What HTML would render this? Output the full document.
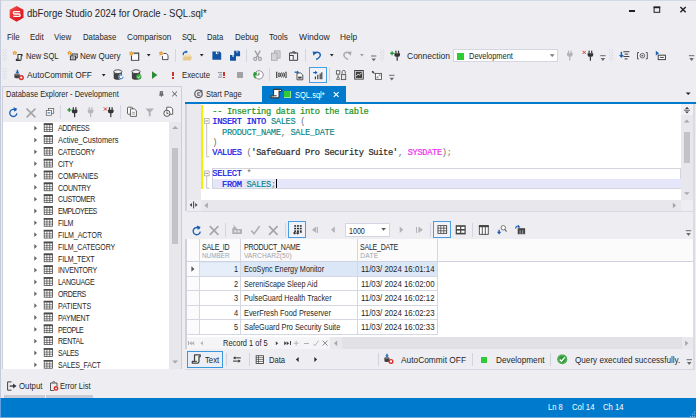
<!DOCTYPE html>
<html lang="en"><head><meta charset="utf-8"><title>dbForge Studio 2024 for Oracle - SQL.sql*</title>
<style>
html,body{margin:0;padding:0;}
body{width:696px;height:418px;overflow:hidden;background:#eeeef2;position:relative;font-family:"Liberation Sans",sans-serif;}
#w{position:absolute;left:0;top:0;width:696px;height:418px;overflow:hidden;background:#eeeef2;}
#w div,#w span,#w svg{position:absolute;}
#w span{white-space:pre;transform:scaleX(0.93);transform-origin:0 0;}
#w span.m{font-family:'Liberation Mono',monospace;transform:none;}
#w svg{overflow:visible;}
</style></head><body><div id="w">
<div style="left:0px;top:0px;width:696px;height:0.8px;background:#d3d8e5;"></div>
<div style="left:0px;top:0px;width:1.1px;height:418px;background:#c6cbdc;"></div>
<div style="left:453px;top:49px;width:105px;height:13px;background:#fff;border:1px solid #d6d6e2;box-sizing:border-box;"></div>
<div style="left:457px;top:53px;width:6.5px;height:6.5px;background:#2ecc32;"></div>
<div style="left:2px;top:86.2px;width:180px;height:283.3px;background:#eeeef2;border:1px solid #ccced9;box-sizing:border-box;"></div>
<div style="left:3px;top:121.5px;width:166.2px;height:247px;background:#fff;"></div>
<div style="left:169.2px;top:121.5px;width:12px;height:247px;background:#e8e8ec;"></div>
<div style="left:172px;top:148.2px;width:6.3px;height:95.4px;background:#c2c3c9;"></div>
<div style="left:3px;top:368.5px;width:178px;height:0.5px;background:#eeeef2;"></div>
<div style="left:262px;top:86.3px;width:83.5px;height:16.5px;background:#007acc;"></div>
<div style="left:184.5px;top:102.3px;width:511px;height:1.9px;background:#007acc;"></div>
<div style="left:185px;top:104px;width:508.5px;height:264.8px;background:#fff;"></div>
<div style="left:185px;top:104px;width:1.5px;height:265px;background:#d0d1da;"></div>
<div style="left:186.5px;top:104px;width:14.2px;height:95.6px;background:#e9e9ee;"></div>
<div style="left:200.7px;top:105.3px;width:2.8px;height:83.3px;background:#f2f200;"></div>
<div style="left:212.3px;top:168.2px;width:469px;height:20.5px;background:#fff;border:1px solid #d4d4dc;box-sizing:border-box;"></div>
<div style="left:212.8px;top:178.6px;width:468px;height:9.6px;background:#e6e6fa;"></div>
<div style="left:681px;top:104px;width:12.5px;height:95.6px;background:#e8e8ec;"></div>
<div style="left:683.7px;top:131.7px;width:6.4px;height:31px;background:#c2c3c9;"></div>
<div style="left:681px;top:104px;width:12.5px;height:11.4px;background:#f1f1f5;"></div>
<div style="left:186.5px;top:199.6px;width:494.5px;height:11.4px;background:#e8e8ec;"></div>
<div style="left:186.5px;top:199.6px;width:14.2px;height:11.4px;background:#eeeef2;"></div>
<div style="left:681px;top:199.6px;width:12.5px;height:11.4px;background:#eeeef2;"></div>
<div style="left:185px;top:211px;width:508.5px;height:28px;background:#eeeef2;"></div>
<div style="left:186.5px;top:211.2px;width:507px;height:0.7px;background:#d9dae3;"></div>
<div style="left:276.2px;top:179.2px;width:0.9px;height:8.8px;background:#000;"></div>
<div style="left:186.5px;top:239px;width:506.5px;height:22.2px;background:#fbfbfc;"></div>
<div style="left:186.5px;top:261px;width:506.5px;height:0.8px;background:#cfd2e0;"></div>
<div style="left:186.5px;top:261.8px;width:251px;height:72.6px;background:#fff;"></div>
<div style="left:186.5px;top:261.8px;width:12.1px;height:72.6px;background:#fbfbfd;"></div>
<div style="left:199px;top:261.8px;width:238.3px;height:14.3px;background:#dbe7f6;"></div>
<div style="left:199.3px;top:262.5px;width:41px;height:13px;background:#e6eefa;"></div>
<div style="left:186.5px;top:275.62px;width:251px;height:0.8px;background:#d5d8e3;"></div>
<div style="left:186.5px;top:290.14000000000004px;width:251px;height:0.8px;background:#d5d8e3;"></div>
<div style="left:186.5px;top:304.66px;width:251px;height:0.8px;background:#d5d8e3;"></div>
<div style="left:186.5px;top:319.18px;width:251px;height:0.8px;background:#d5d8e3;"></div>
<div style="left:186.5px;top:333.70000000000005px;width:251px;height:0.8px;background:#d5d8e3;"></div>
<div style="left:198.6px;top:239px;width:0.8px;height:95.4px;background:#d5d8e3;"></div>
<div style="left:240.3px;top:239px;width:0.8px;height:95.4px;background:#d5d8e3;"></div>
<div style="left:357.4px;top:239px;width:0.8px;height:95.4px;background:#d5d8e3;"></div>
<div style="left:437.2px;top:239px;width:0.8px;height:95.4px;background:#d5d8e3;"></div>
<div style="left:186.5px;top:337px;width:143.7px;height:11.7px;background:#f5f5f8;"></div>
<div style="left:330.2px;top:337px;width:362.8px;height:11.7px;background:#e2e2e6;"></div>
<div style="left:330.2px;top:337px;width:11.5px;height:11.7px;background:#e9e9ed;"></div>
<div style="left:681.5px;top:337px;width:11.5px;height:11.7px;background:#e9e9ed;"></div>
<div style="left:185px;top:348.7px;width:508.5px;height:20.2px;background:#eeeef2;"></div>
<div style="left:185px;top:368.9px;width:509.5px;height:1.2px;background:#d6d8e4;"></div>
<div style="left:186.7px;top:351.3px;width:36.5px;height:16.3px;background:#e9eef7;border:1.2px solid #3c96dc;box-sizing:border-box;"></div>
<div style="left:481px;top:357px;width:6px;height:5.8px;background:#2ecc32;"></div>
<div style="left:225.5px;top:353px;width:0.8px;height:13px;background:#d2d3dc;"></div>
<div style="left:248.9px;top:353px;width:0.8px;height:13px;background:#d2d3dc;"></div>
<div style="left:377.7px;top:353px;width:0.8px;height:13px;background:#d2d3dc;"></div>
<div style="left:471.9px;top:353px;width:0.8px;height:13px;background:#d2d3dc;"></div>
<div style="left:550.4px;top:353px;width:0.8px;height:13px;background:#d2d3dc;"></div>
<div style="left:693px;top:104px;width:1.6px;height:265px;background:#d9dbe5;"></div>
<div style="left:4.1px;top:395px;width:40.7px;height:2.8px;background:#c9cad6;"></div>
<div style="left:46.3px;top:395px;width:46.6px;height:2.8px;background:#c9cad6;"></div>
<div style="left:0px;top:397.8px;width:696px;height:20.2px;background:#007acc;"></div>
<div style="left:0px;top:397.8px;width:1.1px;height:20.2px;background:#5aa3de;"></div>
<div style="left:0px;top:417px;width:696px;height:1px;background:#6aacdf;"></div>
<div style="left:628.6px;top:10px;width:6.3px;height:1.7px;background:#222;"></div>
<div style="left:175.1px;top:49.3px;width:0.9px;height:12.900000000000006px;background:#d3d6e2;"></div>
<div style="left:246.1px;top:49.3px;width:0.9px;height:12.900000000000006px;background:#d3d6e2;"></div>
<div style="left:305.1px;top:49.3px;width:0.9px;height:12.900000000000006px;background:#d3d6e2;"></div>
<div style="left:172px;top:71.8px;width:1.7px;height:4.6px;background:#c8372d;"></div>
<div style="left:172px;top:77.3px;width:1.7px;height:1.5px;background:#c8372d;"></div>
<div style="left:223.1px;top:71.8px;width:1.7px;height:4.6px;background:#c8372d;"></div>
<div style="left:223.1px;top:77.3px;width:1.7px;height:1.2px;background:#c8372d;"></div>
<div style="left:237.4px;top:72.2px;width:5.9px;height:5.8px;background:#a2a2a4;"></div>
<div style="left:269.2px;top:68.4px;width:0.9px;height:12.899999999999991px;background:#d3d6e2;"></div>
<div style="left:308.6px;top:67px;width:18.2px;height:16.3px;background:#f2f3f8;border:1.3px solid #4a9ee0;box-sizing:border-box;"></div>
<div style="left:329.2px;top:68.4px;width:0.9px;height:12.899999999999991px;background:#d3d6e2;"></div>
<div style="left:60px;top:105.3px;width:0.9px;height:13.400000000000006px;background:#d3d6e2;"></div>
<div style="left:120.2px;top:105.3px;width:0.9px;height:13.400000000000006px;background:#d3d6e2;"></div>
<div style="left:283.6px;top:90.5px;width:7.2px;height:7.4px;background:#9be39b;"></div>
<div style="left:284.4px;top:91.3px;width:5.6px;height:5.8px;background:#2ecc32;"></div>
<div style="left:225.2px;top:223.3px;width:0.9px;height:13.699999999999989px;background:#d3d6e2;"></div>
<div style="left:285.1px;top:223.3px;width:0.9px;height:13.699999999999989px;background:#d3d6e2;"></div>
<div style="left:287.9px;top:221.2px;width:18px;height:16.5px;background:#f2f3f8;border:1.3px solid #4a9ee0;box-sizing:border-box;"></div>
<div style="left:317.2px;top:226.6px;width:1.3px;height:6.4px;background:#b4b4b8;"></div>
<div style="left:344.9px;top:223.3px;width:44.7px;height:13.4px;background:#fff;border:1px solid #d6d6e2;box-sizing:border-box;"></div>
<div style="left:415.9px;top:226.6px;width:1.3px;height:6.4px;background:#b4b4b8;"></div>
<div style="left:430.3px;top:223.3px;width:0.9px;height:13.699999999999989px;background:#d3d6e2;"></div>
<div style="left:433.2px;top:221.2px;width:18.2px;height:16.5px;background:#f2f3f8;border:1.3px solid #4a9ee0;box-sizing:border-box;"></div>
<div style="left:471.5px;top:223.3px;width:0.9px;height:13.699999999999989px;background:#d3d6e2;"></div>
<div style="left:188.2px;top:341.2px;width:0.9px;height:4px;background:#b0b0b4;"></div>
<div style="left:289.7px;top:341.2px;width:0.9px;height:4px;background:#444;"></div>
<div style="left:303.8px;top:342.9px;width:5px;height:0.8px;background:#b0b0b4;"></div>
<svg style="left:0;top:0" width="696" height="418" viewBox="0 0 696 418"><g transform="translate(9.7 5.9) scale(1)"><defs><linearGradient id="lg" x1="0" y1="0" x2="1" y2="0.9"><stop offset="0" stop-color="#f5514b"/><stop offset="0.5" stop-color="#e8282c"/><stop offset="1" stop-color="#d0181f"/></linearGradient></defs><path d="M6.9 0L13.8 3.95V11.95L6.9 15.9L0 11.95V3.95Z" fill="url(#lg)"/><path d="M10.4 5.7H4.7Q3.7 5.7 3.7 6.9Q3.7 8.1 4.7 8.1H9.4Q10.4 8.1 10.4 9.3Q10.4 10.5 9.4 10.5H3.6" fill="none" stroke="#fff" stroke-width="1.35"/></g>
<g transform="translate(653.6 6.6) scale(1)"><rect x="0.5" y="0.5" width="5.6" height="5.2" fill="none" stroke="#1e1e1e" stroke-width="1"/><rect x="0" y="0" width="6.6" height="1.6" fill="#1e1e1e"/></g>
<g transform="translate(680.4 7) scale(1)"><path d="M0 0L5.3 5.3M5.3 0L0 5.3" stroke="#222" stroke-width="1.4" fill="none"/></g>
<g transform="translate(2.6 49.3) scale(1)"><path d="M0 0.00h1.2v1h-1.2zM3 0.00h1.2v1h-1.2zM1.5 1.48h1.2v1h-1.2zM0 2.96h1.2v1h-1.2zM3 2.96h1.2v1h-1.2zM1.5 4.44h1.2v1h-1.2zM0 5.92h1.2v1h-1.2zM3 5.92h1.2v1h-1.2zM1.5 7.40h1.2v1h-1.2zM0 8.88h1.2v1h-1.2zM3 8.88h1.2v1h-1.2zM1.5 10.36h1.2v1h-1.2z" fill="#d3d4de"/></g>
<g transform="translate(12.3 50.4) scale(1)"><path d="M2.5 0L3.3 1.4L5 1.7L3.9 2.9L4.2 4.6L2.5 3.9L0.8 4.6L1.1 2.9L0 1.7L1.7 1.4Z" fill="#e0942a"/><circle cx="2.5" cy="2.5" r="0.9" fill="#f3c776"/></g>
<g transform="translate(15.8 54) scale(0.76)"><path d="M2.8 0.6H8.2V2.4H7V7C7 8.2 6.4 8.5 5.6 8.5H0.7V6.8H2.8Z" fill="#fff" stroke="#2e2e2e" stroke-width="1.35" stroke-linejoin="round"/><path d="M2.8 6.8H5.2" stroke="#2e2e2e" stroke-width="1.08" fill="none"/></g>
<g transform="translate(67 50.4) scale(1)"><path d="M2.5 0L3.3 1.4L5 1.7L3.9 2.9L4.2 4.6L2.5 3.9L0.8 4.6L1.1 2.9L0 1.7L1.7 1.4Z" fill="#e0942a"/><circle cx="2.5" cy="2.5" r="0.9" fill="#f3c776"/></g>
<g transform="translate(69.8 53.4) scale(1)"><rect x="2.2" y="0.6" width="5.2" height="3.8" fill="#fff" stroke="#333" stroke-width="1"/><rect x="0.6" y="2.6" width="5.2" height="3.8" fill="#fff" stroke="#333" stroke-width="1"/><path d="M1.6 4.6H4.8" stroke="#2e2e2e" stroke-width="0.9"/></g>
<g transform="translate(128.8 50.8) scale(1)"><path d="M2.5 0L3.3 1.4L5 1.7L3.9 2.9L4.2 4.6L2.5 3.9L0.8 4.6L1.1 2.9L0 1.7L1.7 1.4Z" fill="#e0942a"/><circle cx="2.5" cy="2.5" r="0.9" fill="#f3c776"/></g>
<g transform="translate(131 52.6) scale(1)"><path d="M2.6 0.5H7.7V7.7H0.5V3" fill="none" stroke="#404040" stroke-width="1.1"/><rect x="1.2" y="2.6" width="5.8" height="4.4" fill="#fff"/></g>
<g transform="translate(146.8 54) scale(1)"><path d="M0 0H3.8L1.9 2.4Z" fill="#2b2b2b"/></g>
<g transform="translate(158.6 50.8) scale(1)"><path d="M2.5 0L3.3 1.4L5 1.7L3.9 2.9L4.2 4.6L2.5 3.9L0.8 4.6L1.1 2.9L0 1.7L1.7 1.4Z" fill="#e0942a"/><circle cx="2.5" cy="2.5" r="0.9" fill="#f3c776"/></g>
<g transform="translate(162 53) scale(1)"><path d="M1.5 0.5H4.2L6 2.3V6.6H0.5V3" fill="#fff" stroke="#404040" stroke-width="0.9"/></g>
<g transform="translate(182 50.7) scale(1)"><path d="M0.8 4H4L4.8 3.2H9.2V9.4H0.8Z" fill="#f3e2bd"/><path d="M0.5 9.7L1.8 5.8H10L8.7 9.7Z" fill="#e8c98f"/><path d="M1.3 4.4C0.9 2 2.4 0.9 4.2 1.2" stroke="#1b62b8" stroke-width="1.3" fill="none"/><path d="M3.7 -0.5L6 1.4L3.5 2.9Z" fill="#1b62b8"/></g>
<g transform="translate(199.8 54) scale(1)"><path d="M0 0H3.8L1.9 2.4Z" fill="#2b2b2b"/></g>
<g transform="translate(212.4 51.5) scale(1)"><path d="M0 0H7.3L8.8 1.5V8.3H0Z" fill="#1452a3"/><rect x="3.5" y="0" width="2.4" height="2.6" fill="#f2f4fa"/><rect x="4.7" y="0.4" width="0.9" height="1.7" fill="#1452a3"/></g>
<g transform="translate(234.1 50.7) scale(0.68)"><path d="M0 0H7.3L8.8 1.5V8.3H0Z" fill="#1452a3"/><rect x="3.5" y="0" width="2.4" height="2.6" fill="#f2f4fa"/><rect x="4.7" y="0.4" width="0.9" height="1.7" fill="#1452a3"/></g>
<g transform="translate(230 55) scale(0.68)"><path d="M0 0H7.3L8.8 1.5V8.3H0Z" fill="#1452a3"/><rect x="3.5" y="0" width="2.4" height="2.6" fill="#f2f4fa"/><rect x="4.7" y="0.4" width="0.9" height="1.7" fill="#1452a3"/></g>
<g transform="translate(253.3 50.7) scale(1)"><path d="M1.7 0L5.5 6.8M6.9 0L3.1 6.8" stroke="#9d9da1" stroke-width="1.35" fill="none"/><circle cx="1.9" cy="8.2" r="1.5" fill="none" stroke="#9d9da1" stroke-width="1.1"/><circle cx="6.7" cy="8.2" r="1.5" fill="none" stroke="#9d9da1" stroke-width="1.1"/></g>
<g transform="translate(271.1 50.5) scale(1)"><rect x="3.4" y="0.4" width="5.6" height="7.2" fill="#d4d4d6" stroke="#a4a4a8" stroke-width="0.8"/><rect x="0.4" y="2.6" width="5.6" height="7.2" fill="#d4d4d6" stroke="#a4a4a8" stroke-width="0.8"/></g>
<g transform="translate(289.1 50.9) scale(1)"><path d="M3 1.6C3 0.2 6 0.2 6 1.6" fill="none" stroke="#404040" stroke-width="0.9"/><path d="M4.2 2H8.5V9.4H4.6M0.5 4.6V2H2.4" fill="none" stroke="#404040" stroke-width="1"/><rect x="0.5" y="4.6" width="3.6" height="4.8" fill="#fff" stroke="#404040" stroke-width="1"/><path d="M2 2H7" stroke="#404040" stroke-width="1"/></g>
<g transform="translate(312.6 50.9) scale(1)"><path d="M2.2 2.6C4 0.6 7.6 1.2 7.7 4C7.8 6.2 5.4 7.6 3.6 8.6" fill="none" stroke="#1a5fb4" stroke-width="1.5"/><path d="M0 0.6L4.4 1.2L0.9 4.8Z" fill="#1a5fb4"/></g>
<g transform="translate(329.9 54) scale(1)"><path d="M0 0H3.8L1.9 2.4Z" fill="#2b2b2b"/></g>
<g transform="translate(351.6 50.9) scale(-1 1)"><path d="M2.2 2.6C4 0.6 7.6 1.2 7.7 4C7.8 6.2 5.4 7.6 3.6 8.6" fill="none" stroke="#a9a9ad" stroke-width="1.5"/><path d="M0 0.6L4.4 1.2L0.9 4.8Z" fill="#a9a9ad"/></g>
<g transform="translate(360 54) scale(1)"><path d="M0 0H3.8L1.9 2.4Z" fill="#a0a0a4"/></g>
<g transform="translate(371 55.5) scale(1)"><rect x="0" y="0" width="5.4" height="1" fill="#6a6a6a"/><path d="M0.4 2.9H5L2.7 5.8Z" fill="#6a6a6a"/></g>
<g transform="translate(380 49.3) scale(1)"><path d="M0 0.00h1.2v1h-1.2zM3 0.00h1.2v1h-1.2zM1.5 1.48h1.2v1h-1.2zM0 2.96h1.2v1h-1.2zM3 2.96h1.2v1h-1.2zM1.5 4.44h1.2v1h-1.2zM0 5.92h1.2v1h-1.2zM3 5.92h1.2v1h-1.2zM1.5 7.40h1.2v1h-1.2zM0 8.88h1.2v1h-1.2zM3 8.88h1.2v1h-1.2zM1.5 10.36h1.2v1h-1.2z" fill="#d3d4de"/></g>
<g transform="translate(390.1 51.3) scale(1)"><rect x="1.3" y="0" width="1.4" height="4.0" fill="#2f9a35"/><rect x="0" y="1.3" width="4.0" height="1.4" fill="#2f9a35"/></g>
<g transform="translate(394.4 50.7) scale(1)"><rect x="0.9" y="0" width="1.2" height="2.8" fill="#333"/><rect x="3.5" y="0" width="1.2" height="2.8" fill="#333"/><path d="M0 2.5H5.6V4.2C5.6 5.4 4.4 6.1 3.4 6.1H2.2C1.2 6.1 0 5.4 0 4.2Z" fill="#333"/><rect x="2.2" y="5.8" width="1.2" height="4.2" fill="#333"/></g>
<g transform="translate(549.8 54.3) scale(1)"><path d="M0 0H4.8L2.4 2.6Z" fill="#777"/></g>
<g transform="translate(567 50.6) scale(1)"><rect x="0.9" y="0" width="1.2" height="2.8" fill="#b4b4b8"/><rect x="3.5" y="0" width="1.2" height="2.8" fill="#b4b4b8"/><path d="M0 2.5H5.6V4.2C5.6 5.4 4.4 6.1 3.4 6.1H2.2C1.2 6.1 0 5.4 0 4.2Z" fill="#b4b4b8"/><rect x="2.2" y="5.8" width="1.2" height="4.2" fill="#b4b4b8"/></g>
<g transform="translate(582.6 50.8) scale(1)"><path d="M0 0L3.2 3.2M3.2 0L0 3.2" stroke="#d63a32" stroke-width="1.0" fill="none"/></g>
<g transform="translate(587.6 50.7) scale(1)"><rect x="0.9" y="0" width="1.2" height="2.8" fill="#333"/><rect x="3.5" y="0" width="1.2" height="2.8" fill="#333"/><path d="M0 2.5H5.6V4.2C5.6 5.4 4.4 6.1 3.4 6.1H2.2C1.2 6.1 0 5.4 0 4.2Z" fill="#333"/><rect x="2.2" y="5.8" width="1.2" height="4.2" fill="#333"/></g>
<g transform="translate(600.2 55.2) scale(1)"><rect x="0" y="0" width="5.4" height="1" fill="#6a6a6a"/><path d="M0.4 2.9H5L2.7 5.8Z" fill="#6a6a6a"/></g>
<g transform="translate(609 49.3) scale(1)"><path d="M0 0.00h1.2v1h-1.2zM3 0.00h1.2v1h-1.2zM1.5 1.48h1.2v1h-1.2zM0 2.96h1.2v1h-1.2zM3 2.96h1.2v1h-1.2zM1.5 4.44h1.2v1h-1.2zM0 5.92h1.2v1h-1.2zM3 5.92h1.2v1h-1.2zM1.5 7.40h1.2v1h-1.2zM0 8.88h1.2v1h-1.2zM3 8.88h1.2v1h-1.2zM1.5 10.36h1.2v1h-1.2z" fill="#d3d4de"/></g>
<g transform="translate(619 51.2) scale(1)"><path d="M4.4 0.5H10.4M5.6 2.9H9.2M4.4 5.3H10.4M5.6 7.7H8.6" stroke="#404040" stroke-width="1" fill="none"/><path d="M2.4 0.6V5" stroke="#1a5fb4" stroke-width="1.5"/><path d="M0 3.8H4.8L2.4 6.8Z" fill="#1a5fb4"/></g>
<g transform="translate(637 52) scale(1)"><path d="M2 0.5H0.5V6.9H2M8.8 0.5H10.3V6.9H8.8" fill="none" stroke="#5a5a5a" stroke-width="1"/><circle cx="5.4" cy="3.7" r="2.3" fill="none" stroke="#5a5a5a" stroke-width="0.9"/><rect x="4.6" y="2.9" width="1.6" height="1.6" fill="#5a5a5a"/></g>
<g transform="translate(655.8 50.8) scale(1)"><path d="M0 0L3.2 2.4L0 4.6Z" fill="#1a5fb4"/><rect x="2.4" y="4.4" width="7.2" height="4.4" fill="#fff" stroke="#404040" stroke-width="1"/><path d="M4 6.6H8" stroke="#404040" stroke-width="1"/></g>
<g transform="translate(688.9 55.2) scale(1)"><rect x="0" y="0" width="5.4" height="1" fill="#6a6a6a"/><path d="M0.4 2.9H5L2.7 5.8Z" fill="#6a6a6a"/></g>
<g transform="translate(2.6 68.3) scale(1)"><path d="M0 0.00h1.2v1h-1.2zM3 0.00h1.2v1h-1.2zM1.5 1.48h1.2v1h-1.2zM0 2.96h1.2v1h-1.2zM3 2.96h1.2v1h-1.2zM1.5 4.44h1.2v1h-1.2zM0 5.92h1.2v1h-1.2zM3 5.92h1.2v1h-1.2zM1.5 7.40h1.2v1h-1.2zM0 8.88h1.2v1h-1.2zM3 8.88h1.2v1h-1.2zM1.5 10.36h1.2v1h-1.2z" fill="#d3d4de"/></g>
<g transform="translate(14.4 69.8) scale(1)"><path d="M3 0V2.6" stroke="#1a5fb4" stroke-width="1.4"/><path d="M1 2H5L3 4.2Z" fill="#1a5fb4"/><path d="M0 4.4V7.8C0 8.8 5.4 8.8 5.4 7.8V4.4Z" fill="#404040"/><ellipse cx="2.7" cy="4.5" rx="2.7" ry="1.1" fill="#777"/><circle cx="6.9" cy="7.8" r="2.6" fill="#d9302c"/><circle cx="6.9" cy="7.8" r="1.1" fill="#fff"/></g>
<g transform="translate(101.8 74) scale(1)"><path d="M0 0H3.8L1.9 2.4Z" fill="#2b2b2b"/></g>
<g transform="translate(113.7 69.8) scale(1)"><path d="M0 1.8V8.2C0 9.2 1.8 10 4.1 10S8.2 9.2 8.2 8.2V1.8Z" fill="#404040"/><ellipse cx="4.1" cy="1.9" rx="4.1" ry="1.9" fill="#f4f4f4" stroke="#404040" stroke-width="0.9"/></g>
<g transform="translate(118.5 74.1) scale(1)"><circle cx="2.65" cy="2.65" r="2.65" fill="#f2f6fb"/><path d="M4.6 2.6A2 2 0 1 1 2.6 0.7" fill="none" stroke="#2a74c8" stroke-width="1"/><path d="M2.4 -0.4L4.2 0.8L2.4 2Z" fill="#2a74c8"/></g>
<g transform="translate(131.9 69.8) scale(1)"><path d="M0 1.8V8.2C0 9.2 1.8 10 4.1 10S8.2 9.2 8.2 8.2V1.8Z" fill="#404040"/><ellipse cx="4.1" cy="1.9" rx="4.1" ry="1.9" fill="#f4f4f4" stroke="#404040" stroke-width="0.9"/></g>
<g transform="translate(136.2 74.1) scale(1)"><circle cx="2.65" cy="2.65" r="2.65" fill="#36a33c"/><path d="M1.2 2.7L2.3 3.8L4.2 1.6" fill="none" stroke="#fff" stroke-width="0.9"/></g>
<g transform="translate(152 71.3) scale(1)"><path d="M0 0L5.4 3.8L0 7.6Z" fill="#2e8b32"/></g>
<g transform="translate(217.9 72.2) scale(1)"><path d="M0 0.5H4.3M1.2 2.7H4.3M0 4.9H4.3" stroke="#8c8c90" stroke-width="1"/></g>
<g transform="translate(253.2 70) scale(1)"><circle cx="5.8" cy="4.9" r="4.2" fill="#fff" stroke="#8e8e92" stroke-width="1"/><path d="M5.8 2.6V5H4.2" fill="none" stroke="#555" stroke-width="0.9"/><path d="M1.8 2.2A4.6 4.6 0 0 0 2.6 8.2" fill="none" stroke="#2f9a35" stroke-width="1.5"/><path d="M-0.4 4.4L3.8 2.2L3.4 6Z" fill="#2f9a35"/></g>
<g transform="translate(276.1 71.8) scale(1)"><path d="M1.4 0.5H0.5V5.7H1.4M9.1 0.5H10V5.7H9.1" fill="none" stroke="#4a4a4a" stroke-width="1.1"/><ellipse cx="3" cy="3.1" rx="0.9" ry="2.1" fill="none" stroke="#4a4a4a" stroke-width="1"/><ellipse cx="5.3" cy="3.1" rx="0.9" ry="2.1" fill="none" stroke="#4a4a4a" stroke-width="1"/><ellipse cx="7.6" cy="3.1" rx="0.9" ry="2.1" fill="none" stroke="#4a4a4a" stroke-width="1"/></g>
<g transform="translate(294.6 70.6) scale(1)"><path d="M2.4 2.4H6L8.2 4.4V9.2H2.4Z" fill="#fff" stroke="#404040" stroke-width="0.9"/><rect x="3.6" y="6" width="3.4" height="2" fill="#404040"/><path d="M0 1.6H3" stroke="#1a5fb4" stroke-width="1.3"/><path d="M2.4 -0.2L4.6 1.6L2.4 3.4Z" fill="#1a5fb4"/></g>
<g transform="translate(313.2 71) scale(1)"><path d="M0 1.6H2.6" stroke="#1a5fb4" stroke-width="1.3"/><path d="M2 -0.2L4.4 1.6L2 3.4Z" fill="#1a5fb4"/><path d="M2.2 8.2V5.4M4.6 8.2V3.8M7 8.2V2.4M8.6 8.2V1.2" stroke="#404040" stroke-width="1.2"/></g>
<g transform="translate(335.9 70.2) scale(1)"><rect x="0.5" y="0.5" width="3.4" height="3.4" fill="#fff" stroke="#555" stroke-width="0.9"/><path d="M2.2 4V6.4" stroke="#555" stroke-width="0.8"/><path d="M0.6 9.2L2.2 6.2L3.8 9.2Z" fill="#fff" stroke="#555" stroke-width="0.8"/><path d="M6.2 3.6V1.4C6.2 -0.2 9.4 -0.2 9.4 1.4V3.4" fill="none" stroke="#555" stroke-width="0.9"/><rect x="5.6" y="4.4" width="4.2" height="5" fill="#e8e8e8" stroke="#555" stroke-width="0.9"/></g>
<g transform="translate(354.2 70) scale(1)"><rect x="0.5" y="0.5" width="8.6" height="8.6" fill="#fff" stroke="#404040" stroke-width="1"/><rect x="1.6" y="1.6" width="6.4" height="6.4" fill="#404040"/><path d="M2 6.2L4 4L5.2 5.2L7.4 2.6" fill="none" stroke="#fff" stroke-width="0.8"/></g>
<g transform="translate(371.9 71) scale(1)"><path d="M0.4 0.4L2.6 2.6" stroke="#404040" stroke-width="1.1"/><rect x="0" y="0" width="1.6" height="1.6" fill="#404040"/><rect x="3.6" y="2.4" width="6" height="6" fill="#fff" stroke="#555" stroke-width="0.9"/><rect x="4.6" y="5.4" width="2" height="2" fill="#999"/><rect x="6.8" y="3.4" width="1.8" height="1.8" fill="#999"/></g>
<g transform="translate(389.1 74.8) scale(1)"><rect x="0" y="0" width="5.4" height="1" fill="#6a6a6a"/><path d="M0.4 2.9H5L2.7 5.8Z" fill="#6a6a6a"/></g>
<g transform="translate(158.9 91.3) scale(1)"><rect x="1.2" y="0.4" width="2.6" height="3.2" fill="#888" stroke="#555" stroke-width="0.7"/><path d="M0.2 3.8H4.8M2.5 3.8V5.6" stroke="#555" stroke-width="0.8"/></g>
<g transform="translate(172.2 91.5) scale(1)"><path d="M0 0L4.8 4.8M4.8 0L0 4.8" stroke="#555" stroke-width="1.0" fill="none"/></g>
<g transform="translate(8.8 107.2) scale(1)"><path d="M7.3 3.4A3.6 3.6 0 1 0 8.1 6.2" stroke="#1a5fb4" stroke-width="1.35" fill="none"/><path d="M4.6 0L8.6 1.6L5.6 4.6Z" fill="#1a5fb4"/></g>
<g transform="translate(26.6 108.6) scale(1)"><path d="M0 0L8.8 8.8M8.8 0L0 8.8" stroke="#a6a6aa" stroke-width="1.7" fill="none"/></g>
<g transform="translate(45.9 108.1) scale(1)"><rect x="2.6" y="0.4" width="5.2" height="4.8" fill="#f4f4f4" stroke="#666" stroke-width="0.8"/><rect x="0.4" y="2.4" width="5.2" height="4.8" fill="#fff" stroke="#666" stroke-width="0.8"/><path d="M1.6 4.8H4.4" stroke="#1a5fb4" stroke-width="1"/></g>
<g transform="translate(67.3 107.9) scale(1)"><rect x="1.3" y="0" width="1.4" height="4.0" fill="#2f9a35"/><rect x="0" y="1.3" width="4.0" height="1.4" fill="#2f9a35"/></g>
<g transform="translate(71.8 107.2) scale(1)"><rect x="0.9" y="0" width="1.2" height="2.8" fill="#333"/><rect x="3.5" y="0" width="1.2" height="2.8" fill="#333"/><path d="M0 2.5H5.6V4.2C5.6 5.4 4.4 6.1 3.4 6.1H2.2C1.2 6.1 0 5.4 0 4.2Z" fill="#333"/><rect x="2.2" y="5.8" width="1.2" height="4.2" fill="#333"/></g>
<g transform="translate(87.8 107.2) scale(1)"><rect x="0.9" y="0" width="1.2" height="2.8" fill="#b6b6ba"/><rect x="3.5" y="0" width="1.2" height="2.8" fill="#b6b6ba"/><path d="M0 2.5H5.6V4.2C5.6 5.4 4.4 6.1 3.4 6.1H2.2C1.2 6.1 0 5.4 0 4.2Z" fill="#b6b6ba"/><rect x="2.2" y="5.8" width="1.2" height="4.2" fill="#b6b6ba"/></g>
<g transform="translate(103.8 107.4) scale(1)"><path d="M0 0L3.2 3.2M3.2 0L0 3.2" stroke="#d63a32" stroke-width="1.0" fill="none"/></g>
<g transform="translate(108 107.2) scale(1)"><rect x="0.9" y="0" width="1.2" height="2.8" fill="#333"/><rect x="3.5" y="0" width="1.2" height="2.8" fill="#333"/><path d="M0 2.5H5.6V4.2C5.6 5.4 4.4 6.1 3.4 6.1H2.2C1.2 6.1 0 5.4 0 4.2Z" fill="#333"/><rect x="2.2" y="5.8" width="1.2" height="4.2" fill="#333"/></g>
<g transform="translate(127 106.7) scale(1)"><rect x="0.5" y="0.5" width="5" height="7" rx="0.8" fill="#fff" stroke="#555" stroke-width="0.9"/><path d="M3.4 2.2H7.4L9.4 4V9.7H3.4Z" fill="#fff" stroke="#555" stroke-width="0.9"/><path d="M4.8 5.6H8M4.8 7.4H8" stroke="#777" stroke-width="0.7"/></g>
<g transform="translate(145.4 108.5) scale(1)"><path d="M0 0H8.6L5.2 3.8V7.8H3.4V3.8Z" fill="#b2b2b6"/></g>
<g transform="translate(163.3 106.7) scale(1)"><path d="M3.4 0.5H7.6L9.4 2.2V7.6H3.4Z" fill="#fff" stroke="#555" stroke-width="0.9"/><circle cx="3.6" cy="6.6" r="3.1" fill="#f4f4f4" stroke="#444" stroke-width="0.9"/><path d="M3.6 4.8V6.8H5.2" fill="none" stroke="#444" stroke-width="0.8"/></g>
<g transform="translate(34.3 125.80000000000001) scale(1)"><path d="M0 0L2.7 2.4L0 4.8Z" fill="#626266"/></g>
<g transform="translate(43.8 123.4) scale(1)"><rect x="0.4" y="0.4" width="8.2" height="7.8" fill="#fff" stroke="#4a4a4a" stroke-width="0.8"/><rect x="0" y="0" width="9" height="1.7" fill="#4a4a4a"/><path d="M3.1 1.5V8.2M5.9 1.5V8.2M0.4 3.9H8.6M0.4 6.1H8.6" stroke="#4a4a4a" stroke-width="0.7" fill="none"/></g>
<g transform="translate(34.3 137.63000000000002) scale(1)"><path d="M0 0L2.7 2.4L0 4.8Z" fill="#626266"/></g>
<g transform="translate(43.8 135.23000000000002) scale(1)"><rect x="0.4" y="0.4" width="8.2" height="7.8" fill="#fff" stroke="#4a4a4a" stroke-width="0.8"/><rect x="0" y="0" width="9" height="1.7" fill="#4a4a4a"/><path d="M3.1 1.5V8.2M5.9 1.5V8.2M0.4 3.9H8.6M0.4 6.1H8.6" stroke="#4a4a4a" stroke-width="0.7" fill="none"/></g>
<g transform="translate(34.3 149.46) scale(1)"><path d="M0 0L2.7 2.4L0 4.8Z" fill="#626266"/></g>
<g transform="translate(43.8 147.06) scale(1)"><rect x="0.4" y="0.4" width="8.2" height="7.8" fill="#fff" stroke="#4a4a4a" stroke-width="0.8"/><rect x="0" y="0" width="9" height="1.7" fill="#4a4a4a"/><path d="M3.1 1.5V8.2M5.9 1.5V8.2M0.4 3.9H8.6M0.4 6.1H8.6" stroke="#4a4a4a" stroke-width="0.7" fill="none"/></g>
<g transform="translate(34.3 161.29000000000002) scale(1)"><path d="M0 0L2.7 2.4L0 4.8Z" fill="#626266"/></g>
<g transform="translate(43.8 158.89000000000001) scale(1)"><rect x="0.4" y="0.4" width="8.2" height="7.8" fill="#fff" stroke="#4a4a4a" stroke-width="0.8"/><rect x="0" y="0" width="9" height="1.7" fill="#4a4a4a"/><path d="M3.1 1.5V8.2M5.9 1.5V8.2M0.4 3.9H8.6M0.4 6.1H8.6" stroke="#4a4a4a" stroke-width="0.7" fill="none"/></g>
<g transform="translate(34.3 173.12) scale(1)"><path d="M0 0L2.7 2.4L0 4.8Z" fill="#626266"/></g>
<g transform="translate(43.8 170.72) scale(1)"><rect x="0.4" y="0.4" width="8.2" height="7.8" fill="#fff" stroke="#4a4a4a" stroke-width="0.8"/><rect x="0" y="0" width="9" height="1.7" fill="#4a4a4a"/><path d="M3.1 1.5V8.2M5.9 1.5V8.2M0.4 3.9H8.6M0.4 6.1H8.6" stroke="#4a4a4a" stroke-width="0.7" fill="none"/></g>
<g transform="translate(34.3 184.95000000000002) scale(1)"><path d="M0 0L2.7 2.4L0 4.8Z" fill="#626266"/></g>
<g transform="translate(43.8 182.55) scale(1)"><rect x="0.4" y="0.4" width="8.2" height="7.8" fill="#fff" stroke="#4a4a4a" stroke-width="0.8"/><rect x="0" y="0" width="9" height="1.7" fill="#4a4a4a"/><path d="M3.1 1.5V8.2M5.9 1.5V8.2M0.4 3.9H8.6M0.4 6.1H8.6" stroke="#4a4a4a" stroke-width="0.7" fill="none"/></g>
<g transform="translate(34.3 196.78) scale(1)"><path d="M0 0L2.7 2.4L0 4.8Z" fill="#626266"/></g>
<g transform="translate(43.8 194.38) scale(1)"><rect x="0.4" y="0.4" width="8.2" height="7.8" fill="#fff" stroke="#4a4a4a" stroke-width="0.8"/><rect x="0" y="0" width="9" height="1.7" fill="#4a4a4a"/><path d="M3.1 1.5V8.2M5.9 1.5V8.2M0.4 3.9H8.6M0.4 6.1H8.6" stroke="#4a4a4a" stroke-width="0.7" fill="none"/></g>
<g transform="translate(34.3 208.61) scale(1)"><path d="M0 0L2.7 2.4L0 4.8Z" fill="#626266"/></g>
<g transform="translate(43.8 206.21) scale(1)"><rect x="0.4" y="0.4" width="8.2" height="7.8" fill="#fff" stroke="#4a4a4a" stroke-width="0.8"/><rect x="0" y="0" width="9" height="1.7" fill="#4a4a4a"/><path d="M3.1 1.5V8.2M5.9 1.5V8.2M0.4 3.9H8.6M0.4 6.1H8.6" stroke="#4a4a4a" stroke-width="0.7" fill="none"/></g>
<g transform="translate(34.3 220.44000000000003) scale(1)"><path d="M0 0L2.7 2.4L0 4.8Z" fill="#626266"/></g>
<g transform="translate(43.8 218.04000000000002) scale(1)"><rect x="0.4" y="0.4" width="8.2" height="7.8" fill="#fff" stroke="#4a4a4a" stroke-width="0.8"/><rect x="0" y="0" width="9" height="1.7" fill="#4a4a4a"/><path d="M3.1 1.5V8.2M5.9 1.5V8.2M0.4 3.9H8.6M0.4 6.1H8.6" stroke="#4a4a4a" stroke-width="0.7" fill="none"/></g>
<g transform="translate(34.3 232.27) scale(1)"><path d="M0 0L2.7 2.4L0 4.8Z" fill="#626266"/></g>
<g transform="translate(43.8 229.87) scale(1)"><rect x="0.4" y="0.4" width="8.2" height="7.8" fill="#fff" stroke="#4a4a4a" stroke-width="0.8"/><rect x="0" y="0" width="9" height="1.7" fill="#4a4a4a"/><path d="M3.1 1.5V8.2M5.9 1.5V8.2M0.4 3.9H8.6M0.4 6.1H8.6" stroke="#4a4a4a" stroke-width="0.7" fill="none"/></g>
<g transform="translate(34.3 244.1) scale(1)"><path d="M0 0L2.7 2.4L0 4.8Z" fill="#626266"/></g>
<g transform="translate(43.8 241.7) scale(1)"><rect x="0.4" y="0.4" width="8.2" height="7.8" fill="#fff" stroke="#4a4a4a" stroke-width="0.8"/><rect x="0" y="0" width="9" height="1.7" fill="#4a4a4a"/><path d="M3.1 1.5V8.2M5.9 1.5V8.2M0.4 3.9H8.6M0.4 6.1H8.6" stroke="#4a4a4a" stroke-width="0.7" fill="none"/></g>
<g transform="translate(34.3 255.93) scale(1)"><path d="M0 0L2.7 2.4L0 4.8Z" fill="#626266"/></g>
<g transform="translate(43.8 253.53) scale(1)"><rect x="0.4" y="0.4" width="8.2" height="7.8" fill="#fff" stroke="#4a4a4a" stroke-width="0.8"/><rect x="0" y="0" width="9" height="1.7" fill="#4a4a4a"/><path d="M3.1 1.5V8.2M5.9 1.5V8.2M0.4 3.9H8.6M0.4 6.1H8.6" stroke="#4a4a4a" stroke-width="0.7" fill="none"/></g>
<g transform="translate(34.3 267.76) scale(1)"><path d="M0 0L2.7 2.4L0 4.8Z" fill="#626266"/></g>
<g transform="translate(43.8 265.36) scale(1)"><rect x="0.4" y="0.4" width="8.2" height="7.8" fill="#fff" stroke="#4a4a4a" stroke-width="0.8"/><rect x="0" y="0" width="9" height="1.7" fill="#4a4a4a"/><path d="M3.1 1.5V8.2M5.9 1.5V8.2M0.4 3.9H8.6M0.4 6.1H8.6" stroke="#4a4a4a" stroke-width="0.7" fill="none"/></g>
<g transform="translate(34.3 279.59) scale(1)"><path d="M0 0L2.7 2.4L0 4.8Z" fill="#626266"/></g>
<g transform="translate(43.8 277.19) scale(1)"><rect x="0.4" y="0.4" width="8.2" height="7.8" fill="#fff" stroke="#4a4a4a" stroke-width="0.8"/><rect x="0" y="0" width="9" height="1.7" fill="#4a4a4a"/><path d="M3.1 1.5V8.2M5.9 1.5V8.2M0.4 3.9H8.6M0.4 6.1H8.6" stroke="#4a4a4a" stroke-width="0.7" fill="none"/></g>
<g transform="translate(34.3 291.41999999999996) scale(1)"><path d="M0 0L2.7 2.4L0 4.8Z" fill="#626266"/></g>
<g transform="translate(43.8 289.02) scale(1)"><rect x="0.4" y="0.4" width="8.2" height="7.8" fill="#fff" stroke="#4a4a4a" stroke-width="0.8"/><rect x="0" y="0" width="9" height="1.7" fill="#4a4a4a"/><path d="M3.1 1.5V8.2M5.9 1.5V8.2M0.4 3.9H8.6M0.4 6.1H8.6" stroke="#4a4a4a" stroke-width="0.7" fill="none"/></g>
<g transform="translate(34.3 303.25) scale(1)"><path d="M0 0L2.7 2.4L0 4.8Z" fill="#626266"/></g>
<g transform="translate(43.8 300.85) scale(1)"><rect x="0.4" y="0.4" width="8.2" height="7.8" fill="#fff" stroke="#4a4a4a" stroke-width="0.8"/><rect x="0" y="0" width="9" height="1.7" fill="#4a4a4a"/><path d="M3.1 1.5V8.2M5.9 1.5V8.2M0.4 3.9H8.6M0.4 6.1H8.6" stroke="#4a4a4a" stroke-width="0.7" fill="none"/></g>
<g transform="translate(34.3 315.08) scale(1)"><path d="M0 0L2.7 2.4L0 4.8Z" fill="#626266"/></g>
<g transform="translate(43.8 312.68) scale(1)"><rect x="0.4" y="0.4" width="8.2" height="7.8" fill="#fff" stroke="#4a4a4a" stroke-width="0.8"/><rect x="0" y="0" width="9" height="1.7" fill="#4a4a4a"/><path d="M3.1 1.5V8.2M5.9 1.5V8.2M0.4 3.9H8.6M0.4 6.1H8.6" stroke="#4a4a4a" stroke-width="0.7" fill="none"/></g>
<g transform="translate(34.3 326.90999999999997) scale(1)"><path d="M0 0L2.7 2.4L0 4.8Z" fill="#626266"/></g>
<g transform="translate(43.8 324.51) scale(1)"><rect x="0.4" y="0.4" width="8.2" height="7.8" fill="#fff" stroke="#4a4a4a" stroke-width="0.8"/><rect x="0" y="0" width="9" height="1.7" fill="#4a4a4a"/><path d="M3.1 1.5V8.2M5.9 1.5V8.2M0.4 3.9H8.6M0.4 6.1H8.6" stroke="#4a4a4a" stroke-width="0.7" fill="none"/></g>
<g transform="translate(34.3 338.74) scale(1)"><path d="M0 0L2.7 2.4L0 4.8Z" fill="#626266"/></g>
<g transform="translate(43.8 336.34000000000003) scale(1)"><rect x="0.4" y="0.4" width="8.2" height="7.8" fill="#fff" stroke="#4a4a4a" stroke-width="0.8"/><rect x="0" y="0" width="9" height="1.7" fill="#4a4a4a"/><path d="M3.1 1.5V8.2M5.9 1.5V8.2M0.4 3.9H8.6M0.4 6.1H8.6" stroke="#4a4a4a" stroke-width="0.7" fill="none"/></g>
<g transform="translate(34.3 350.57) scale(1)"><path d="M0 0L2.7 2.4L0 4.8Z" fill="#626266"/></g>
<g transform="translate(43.8 348.17) scale(1)"><rect x="0.4" y="0.4" width="8.2" height="7.8" fill="#fff" stroke="#4a4a4a" stroke-width="0.8"/><rect x="0" y="0" width="9" height="1.7" fill="#4a4a4a"/><path d="M3.1 1.5V8.2M5.9 1.5V8.2M0.4 3.9H8.6M0.4 6.1H8.6" stroke="#4a4a4a" stroke-width="0.7" fill="none"/></g>
<g transform="translate(34.3 362.4) scale(1)"><path d="M0 0L2.7 2.4L0 4.8Z" fill="#626266"/></g>
<g transform="translate(43.8 360.0) scale(1)"><rect x="0.4" y="0.4" width="8.2" height="7.8" fill="#fff" stroke="#4a4a4a" stroke-width="0.8"/><rect x="0" y="0" width="9" height="1.7" fill="#4a4a4a"/><path d="M3.1 1.5V8.2M5.9 1.5V8.2M0.4 3.9H8.6M0.4 6.1H8.6" stroke="#4a4a4a" stroke-width="0.7" fill="none"/></g>
<g transform="translate(172.2 125.9) scale(1)"><path d="M0 3L3 0L6 3Z" fill="#a8a8ac"/></g>
<g transform="translate(172.2 360.5) scale(1)"><path d="M0 0L3 3L6 0Z" fill="#a8a8ac"/></g>
<g transform="translate(194.1 89.7) scale(1)"><circle cx="4.4" cy="4.2" r="3.7" fill="none" stroke="#5e5e62" stroke-width="1.3"/><path d="M6.2 3H3.7V5.5H6.2" fill="none" stroke="#5e5e62" stroke-width="1.1"/><path d="M6.4 -0.2L8.9 1.3L6.6 2.9Z" fill="#5e5e62"/></g>
<g transform="translate(270.3 88.6) scale(1)"><path d="M3.2 0.7H10.4Q11.3 0.7 11.3 1.7V2.9H8.8V7.6Q8.8 9.2 7.2 9.2H1.6Q0.6 9.2 0.6 8.2V7.2H3.2Z" fill="#fff" stroke="#3a3a3a" stroke-width="1.2" stroke-linejoin="round"/><path d="M3.2 7.2H6.4M8.8 2.9V1.8" stroke="#3a3a3a" stroke-width="1" fill="none"/></g>
<g transform="translate(333.8 92.1) scale(1)"><path d="M0 0L4.8 4.8M4.8 0L0 4.8" stroke="#fff" stroke-width="1.2" fill="none"/></g>
<g transform="translate(685.8 92.4) scale(1)"><path d="M0 0H4.8L2.4 2.7Z" fill="#1e1e1e"/></g>
<g transform="translate(203.9 118.2) scale(1)"><rect x="0.4" y="0.4" width="4.8" height="4.8" fill="#fff" stroke="#a8a8ac" stroke-width="0.8"/><path d="M1.4 2.8H4.2" stroke="#777" stroke-width="0.8"/><path d="M2.8 5.4V38.6H5.6" fill="none" stroke="#b0b0b4" stroke-width="0.8"/></g>
<g transform="translate(203.9 170.6) scale(1)"><rect x="0.4" y="0.4" width="4.8" height="4.8" fill="#fff" stroke="#a8a8ac" stroke-width="0.8"/><path d="M1.4 2.8H4.2" stroke="#777" stroke-width="0.8"/><path d="M2.8 5.4V17.6H5.6" fill="none" stroke="#b0b0b4" stroke-width="0.8"/></g>
<g transform="translate(683.6 106.8) scale(1)"><path d="M0.4 3.4H6.4" stroke="#444" stroke-width="0.9"/><path d="M3.4 0L5.4 2.2H1.4ZM3.4 6.8L5.4 4.6H1.4Z" fill="#444"/></g>
<g transform="translate(684 119.6) scale(1)"><path d="M0 2.8L2.8 0L5.6 2.8Z" fill="#a8a8ac"/></g>
<g transform="translate(684 192.2) scale(1)"><path d="M0 0L2.8 2.8L5.6 0Z" fill="#a8a8ac"/></g>
<g transform="translate(204.4 202.6) scale(1)"><path d="M3.4 0L0 2.8L3.4 5.6Z" fill="#a8a8ac"/></g>
<g transform="translate(672.8 202.6) scale(1)"><path d="M0 0L3.4 2.8L0 5.6Z" fill="#a8a8ac"/></g>
<g transform="translate(189.6 201.4) scale(1)"><path d="M4 0V7" stroke="#444" stroke-width="1"/><path d="M0 3.5L2.4 1.7V5.3ZM8 3.5L5.6 1.7V5.3Z" fill="#444"/></g>
<g transform="translate(192.2 225.4) scale(1)"><path d="M7.3 3.4A3.6 3.6 0 1 0 8.1 6.2" stroke="#1a5fb4" stroke-width="1.35" fill="none"/><path d="M4.6 0L8.6 1.6L5.6 4.6Z" fill="#1a5fb4"/></g>
<g transform="translate(209.8 226.2) scale(1)"><path d="M0 0L8.6 8.6M8.6 0L0 8.6" stroke="#a6a6aa" stroke-width="1.7" fill="none"/></g>
<g transform="translate(232.3 225.2) scale(1)"><path d="M0 8.8V3.4L2 1.2L4.6 3.8H9.6V8.8Z" fill="#b0b0b4"/><path d="M1 0L4.4 3.2" stroke="#b0b0b4" stroke-width="1"/><rect x="2" y="5.2" width="2" height="2" fill="#eee"/><rect x="5.4" y="5.2" width="2" height="2" fill="#eee"/></g>
<g transform="translate(250.9 225.6) scale(1)"><path d="M0.4 5L3.2 8.2L8.8 0.4" fill="none" stroke="#b0b0b4" stroke-width="1.6"/></g>
<g transform="translate(269 226.2) scale(1)"><path d="M0 0L8.6 8.6M8.6 0L0 8.6" stroke="#a6a6aa" stroke-width="1.7" fill="none"/></g>
<g transform="translate(292.2 225.1) scale(1)"><rect x="2.00" y="0.10" width="1.9" height="1.5" fill="#262626"/><rect x="2.00" y="2.70" width="1.9" height="1.5" fill="#262626"/><rect x="2.00" y="5.30" width="1.9" height="1.5" fill="#262626"/><rect x="4.80" y="0.10" width="1.9" height="1.5" fill="#262626"/><rect x="4.80" y="2.70" width="1.9" height="1.5" fill="#262626"/><rect x="4.80" y="5.30" width="1.9" height="1.5" fill="#262626"/><rect x="7.60" y="0.10" width="1.9" height="1.5" fill="#262626"/><rect x="7.60" y="2.70" width="1.9" height="1.5" fill="#262626"/><rect x="7.60" y="5.30" width="1.9" height="1.5" fill="#262626"/><path d="M2 8H6" stroke="#2e2e2e" stroke-width="0.9"/><path d="M0.6 8L3 6.4V9.6ZM7.4 8L5 6.4V9.6Z" fill="#2e2e2e"/><rect x="8.1" y="6.6" width="1.3" height="1.3" fill="#2e2e2e"/></g>
<g transform="translate(311.9 226.6) scale(1)"><path d="M4.4 0L0 3.2L4.4 6.4Z" fill="#b4b4b8"/></g>
<g transform="translate(331 226.6) scale(1)"><path d="M3.8 0L0 3.2L3.8 6.4Z" fill="#b4b4b8"/></g>
<g transform="translate(381.3 228.1) scale(1)"><path d="M0 0H4.6L2.3 2.6Z" fill="#555"/></g>
<g transform="translate(399.7 226.6) scale(1)"><path d="M0 0L3.6 3.2L0 6.4Z" fill="#b4b4b8"/></g>
<g transform="translate(418.4 226.6) scale(1)"><path d="M0 0L4.6 3.2L0 6.4Z" fill="#b4b4b8"/></g>
<g transform="translate(437.5 225.2) scale(1)"><rect x="0.45" y="0.45" width="8.7" height="7.7" fill="#fff" stroke="#444" stroke-width="0.9"/><path d="M3.3 0.4V8.2M6.3 0.4V8.2M0.4 3H9.2M0.4 5.6H9.2" stroke="#444" stroke-width="0.8"/></g>
<g transform="translate(455.7 225.2) scale(1)"><rect x="0" y="0" width="10" height="9.2" fill="#444"/><rect x="1.2" y="1.6" width="3.2" height="2.2" fill="#fff"/><rect x="5.6" y="1.6" width="3.2" height="2.2" fill="#fff"/><rect x="1.2" y="5.4" width="3.2" height="2.2" fill="#fff"/><rect x="5.6" y="5.4" width="3.2" height="2.2" fill="#fff"/></g>
<g transform="translate(478.9 225.2) scale(1)"><rect x="0.45" y="0.45" width="8.9" height="8.7" fill="#fff" stroke="#444" stroke-width="0.9"/><rect x="0" y="0" width="9.8" height="2" fill="#444"/><path d="M3.4 1V9M6.4 1V9" stroke="#444" stroke-width="0.9"/></g>
<g transform="translate(496.9 225.2) scale(1)"><circle cx="6.4" cy="2.6" r="2.2" fill="#fff" stroke="#666" stroke-width="0.9"/><path d="M7.9 4.2L9.6 6.4" stroke="#666" stroke-width="1.1"/><path d="M2.2 4.6V7.4" stroke="#1a5fb4" stroke-width="1.4"/><path d="M0 6.6H4.4L2.2 9.4Z" fill="#1a5fb4"/></g>
<g transform="translate(514.9 225.2) scale(1)"><path d="M0.8 3.4A2.2 2.2 0 0 1 4.4 1.4" fill="none" stroke="#1a5fb4" stroke-width="1.1"/><path d="M3.4 -0.4L5.4 2.2L2.6 2.6Z" fill="#1a5fb4"/><rect x="2.8" y="3" width="7.4" height="6" fill="#444"/><path d="M5.2 5V9M7.8 5V9" stroke="#ddd" stroke-width="0.6"/></g>
<g transform="translate(685.8 230.2) scale(1)"><rect x="0" y="0" width="5.4" height="1" fill="#6a6a6a"/><path d="M0.4 2.9H5L2.7 5.8Z" fill="#6a6a6a"/></g>
<g transform="translate(191.4 266.2) scale(1)"><path d="M0 0L3 2.8L0 5.6Z" fill="#555"/></g>
<g transform="translate(189.2 341.2) scale(1)"><path d="M2.6 0L0 2.0L2.6 4Z" fill="#b0b0b4"/></g>
<g transform="translate(191.6 341.2) scale(1)"><path d="M2.6 0L0 2.0L2.6 4Z" fill="#b0b0b4"/></g>
<g transform="translate(200.4 341.2) scale(1)"><path d="M2.6 0L0 2.0L2.6 4Z" fill="#b0b0b4"/></g>
<g transform="translate(275.8 341.2) scale(1)"><path d="M0 0L2.4 2.0L0 4Z" fill="#444"/></g>
<g transform="translate(284.1 341.2) scale(1)"><path d="M0 0L2.6 2.0L0 4Z" fill="#444"/></g>
<g transform="translate(286.6 341.2) scale(1)"><path d="M0 0L2.6 2.0L0 4Z" fill="#444"/></g>
<g transform="translate(293.8 340.8) scale(1)"><path d="M2.4 0V4.8M0 2.4H4.8" stroke="#b0b0b4" stroke-width="0.9"/></g>
<g transform="translate(313.2 340.4) scale(1)"><path d="M0.2 3.4L1.8 5.2L5.4 0.2" fill="none" stroke="#b0b0b4" stroke-width="0.9"/></g>
<g transform="translate(322.6 340.6) scale(1)"><path d="M0 0L5 5M5 0L0 5" stroke="#8a8a8e" stroke-width="1.0" fill="none"/></g>
<g transform="translate(334 340.4) scale(1)"><path d="M3.2 0L0 2.8L3.2 5.6Z" fill="#a8a8ac"/></g>
<g transform="translate(685.2 340.4) scale(1)"><path d="M0 0L3.2 2.8L0 5.6Z" fill="#a8a8ac"/></g>
<g transform="translate(191.6 354.2) scale(1.05)"><path d="M2.8 0.6H8.2V2.4H7V7C7 8.2 6.4 8.5 5.6 8.5H0.7V6.8H2.8Z" fill="#f4f4f4" stroke="#444" stroke-width="1.2" stroke-linejoin="round"/><path d="M2.8 6.8H5.2" stroke="#444" stroke-width="0.96" fill="none"/></g>
<g transform="translate(233 356.3) scale(1)"><path d="M1.6 1.6H7.8M0 4.8H6.2" stroke="#333" stroke-width="1"/><path d="M2.4 0L0 1.6L2.4 3.2ZM5.4 3.2L7.8 4.8L5.4 6.4Z" fill="#333"/></g>
<g transform="translate(255.7 355.3) scale(1)"><rect x="0.45" y="0.45" width="7.3" height="7.7" fill="#fff" stroke="#444" stroke-width="0.9"/><path d="M2.8 0.4V8.2M0.4 2.4H7.8M0.4 4.3H7.8M0.4 6.2H7.8" stroke="#444" stroke-width="0.7"/></g>
<g transform="translate(295.9 357) scale(1)"><path d="M2.8 0L0 2.5L2.8 5Z" fill="#2a2a2a"/></g>
<g transform="translate(314.3 357) scale(1)"><path d="M0 0L2.8 2.5L0 5Z" fill="#2a2a2a"/></g>
<g transform="translate(384.4 353.8) scale(1)"><path d="M2.6 0V2.4" stroke="#1a5fb4" stroke-width="1.3"/><path d="M0.8 1.8H4.4L2.6 3.8Z" fill="#1a5fb4"/><path d="M0 4V7.4C0 8.4 5 8.4 5 7.4V4Z" fill="#404040"/><ellipse cx="2.5" cy="4.1" rx="2.5" ry="1" fill="#777"/><circle cx="6.6" cy="7.6" r="2.5" fill="#d9302c"/><circle cx="6.6" cy="7.6" r="1.1" fill="#fff"/></g>
<g transform="translate(557.3 354.4) scale(1)"><circle cx="4.95" cy="4.95" r="4.95" fill="#2c9a36"/><circle cx="4.95" cy="4.95" r="4" fill="none" stroke="#fff" stroke-width="0.5" opacity="0.5"/><path d="M2.4 5L4.2 6.9L7.4 3" fill="none" stroke="#fff" stroke-width="1.4"/></g>
<g transform="translate(686.5 359.2) scale(1)"><rect x="0" y="0" width="5.4" height="1" fill="#6a6a6a"/><path d="M0.4 2.9H5L2.7 5.8Z" fill="#6a6a6a"/></g>
<g transform="translate(7.1 381.4) scale(1)"><path d="M4.4 0.5H0.5V8.8H4.4" fill="none" stroke="#444" stroke-width="1"/><path d="M2.6 4.65H7" stroke="#333" stroke-width="1.3"/><path d="M6 2.2L9.4 4.65L6 7.1Z" fill="#333"/></g>
<g transform="translate(50 381.2) scale(1)"><path d="M2.4 1.4C2.4 0 5 0 5 1.4" fill="none" stroke="#444" stroke-width="0.8"/><path d="M4 9.3H0.5V1.8H7V5" fill="none" stroke="#444" stroke-width="0.9"/><circle cx="6" cy="7.2" r="2.4" fill="#d9302c"/><circle cx="6" cy="7.2" r="0.9" fill="#fff"/></g>
<g transform="translate(689.5 411.5) scale(1)"><path d="M5 0V1M3 2.2V3.2M5 2.2V3.2M1 4.4V5.4M3 4.4V5.4M5 4.4V5.4" stroke="#7fbbe6" stroke-width="1.1"/></g></svg>
<span style="left:27.30px;top:9.17px;font-size:10.2px;line-height:10.2px;color:#262626;letter-spacing:0.000px;transform:scaleX(0.936);">dbForge Studio 2024 for Oracle - SQL.sql*</span>
<span style="left:7.00px;top:32.75px;font-size:8.8px;line-height:8.8px;color:#262626;letter-spacing:0.000px;transform:scaleX(0.902);">File</span>
<span style="left:30.20px;top:32.75px;font-size:8.8px;line-height:8.8px;color:#262626;letter-spacing:0.000px;transform:scaleX(0.903);">Edit</span>
<span style="left:54.40px;top:32.75px;font-size:8.8px;line-height:8.8px;color:#262626;letter-spacing:0.000px;transform:scaleX(0.914);">View</span>
<span style="left:82.70px;top:32.75px;font-size:8.8px;line-height:8.8px;color:#262626;letter-spacing:0.000px;transform:scaleX(0.884);">Database</span>
<span style="left:126.70px;top:32.75px;font-size:8.8px;line-height:8.8px;color:#262626;letter-spacing:0.000px;transform:scaleX(0.936);">Comparison</span>
<span style="left:182.00px;top:32.75px;font-size:8.8px;line-height:8.8px;color:#262626;letter-spacing:-0.293px;word-spacing:0.59px;transform:scaleX(0.840);">SQL</span>
<span style="left:207.20px;top:32.75px;font-size:8.8px;line-height:8.8px;color:#262626;letter-spacing:0.000px;transform:scaleX(0.871);">Data</span>
<span style="left:234.70px;top:32.75px;font-size:8.8px;line-height:8.8px;color:#262626;letter-spacing:0.000px;transform:scaleX(0.906);">Debug</span>
<span style="left:269.40px;top:32.75px;font-size:8.8px;line-height:8.8px;color:#262626;letter-spacing:0.000px;transform:scaleX(0.920);">Tools</span>
<span style="left:299.00px;top:32.75px;font-size:8.8px;line-height:8.8px;color:#262626;letter-spacing:0.000px;transform:scaleX(0.981);">Window</span>
<span style="left:340.00px;top:32.75px;font-size:8.8px;line-height:8.8px;color:#262626;letter-spacing:0.000px;transform:scaleX(0.945);">Help</span>
<span style="left:26.00px;top:51.85px;font-size:8.8px;line-height:8.8px;color:#262626;letter-spacing:0.000px;transform:scaleX(0.866);">New SQL</span>
<span style="left:80.40px;top:51.85px;font-size:8.8px;line-height:8.8px;color:#262626;letter-spacing:0.000px;transform:scaleX(0.920);">New Query</span>
<span style="left:407.00px;top:51.85px;font-size:8.8px;line-height:8.8px;color:#262626;letter-spacing:0.000px;transform:scaleX(0.966);">Connection</span>
<span style="left:469.30px;top:51.65px;font-size:8.8px;line-height:8.8px;color:#262626;letter-spacing:0.000px;transform:scaleX(0.847);">Development</span>
<span style="left:27.30px;top:70.75px;font-size:8.8px;line-height:8.8px;color:#262626;letter-spacing:0.000px;transform:scaleX(0.947);">AutoCommit OFF</span>
<span style="left:181.70px;top:70.75px;font-size:8.8px;line-height:8.8px;color:#262626;letter-spacing:0.000px;transform:scaleX(0.881);">Execute</span>
<span style="left:5.90px;top:90.25px;font-size:8.8px;line-height:8.8px;color:#262626;letter-spacing:0.000px;transform:scaleX(0.851);">Database Explorer - Development</span>
<span style="left:58.30px;top:124.39px;font-size:8.4px;line-height:8.4px;color:#262626;letter-spacing:-0.440px;word-spacing:0.88px;transform:scaleX(0.840);">ADDRESS</span>
<span style="left:58.30px;top:136.22px;font-size:8.4px;line-height:8.4px;color:#262626;letter-spacing:0.000px;transform:scaleX(0.890);">Active_Customers</span>
<span style="left:58.30px;top:148.05px;font-size:8.4px;line-height:8.4px;color:#262626;letter-spacing:-0.295px;word-spacing:0.59px;transform:scaleX(0.840);">CATEGORY</span>
<span style="left:58.30px;top:159.88px;font-size:8.4px;line-height:8.4px;color:#262626;letter-spacing:-0.248px;word-spacing:0.50px;transform:scaleX(0.840);">CITY</span>
<span style="left:58.30px;top:171.71px;font-size:8.4px;line-height:8.4px;color:#262626;letter-spacing:-0.238px;word-spacing:0.48px;transform:scaleX(0.840);">COMPANIES</span>
<span style="left:58.30px;top:183.54px;font-size:8.4px;line-height:8.4px;color:#262626;letter-spacing:-0.330px;word-spacing:0.66px;transform:scaleX(0.840);">COUNTRY</span>
<span style="left:58.30px;top:195.37px;font-size:8.4px;line-height:8.4px;color:#262626;letter-spacing:-0.465px;word-spacing:0.93px;transform:scaleX(0.840);">CUSTOMER</span>
<span style="left:58.30px;top:207.20px;font-size:8.4px;line-height:8.4px;color:#262626;letter-spacing:-0.611px;word-spacing:1.22px;transform:scaleX(0.840);">EMPLOYEES</span>
<span style="left:58.30px;top:219.03px;font-size:8.4px;line-height:8.4px;color:#262626;letter-spacing:-0.248px;word-spacing:0.50px;transform:scaleX(0.840);">FILM</span>
<span style="left:58.30px;top:230.86px;font-size:8.4px;line-height:8.4px;color:#262626;letter-spacing:-0.058px;word-spacing:0.12px;transform:scaleX(0.840);">FILM_ACTOR</span>
<span style="left:58.30px;top:242.69px;font-size:8.4px;line-height:8.4px;color:#262626;letter-spacing:-0.156px;word-spacing:0.31px;transform:scaleX(0.840);">FILM_CATEGORY</span>
<span style="left:58.30px;top:254.52px;font-size:8.4px;line-height:8.4px;color:#262626;letter-spacing:-0.196px;word-spacing:0.39px;transform:scaleX(0.840);">FILM_TEXT</span>
<span style="left:58.30px;top:266.35px;font-size:8.4px;line-height:8.4px;color:#262626;letter-spacing:-0.222px;word-spacing:0.44px;transform:scaleX(0.840);">INVENTORY</span>
<span style="left:58.30px;top:278.18px;font-size:8.4px;line-height:8.4px;color:#262626;letter-spacing:-0.425px;word-spacing:0.85px;transform:scaleX(0.840);">LANGUAGE</span>
<span style="left:58.30px;top:290.01px;font-size:8.4px;line-height:8.4px;color:#262626;letter-spacing:-0.431px;word-spacing:0.86px;transform:scaleX(0.840);">ORDERS</span>
<span style="left:58.30px;top:301.84px;font-size:8.4px;line-height:8.4px;color:#262626;letter-spacing:-0.045px;word-spacing:0.09px;transform:scaleX(0.840);">PATIENTS</span>
<span style="left:58.30px;top:313.67px;font-size:8.4px;line-height:8.4px;color:#262626;letter-spacing:-0.252px;word-spacing:0.50px;transform:scaleX(0.840);">PAYMENT</span>
<span style="left:58.30px;top:325.50px;font-size:8.4px;line-height:8.4px;color:#262626;letter-spacing:-0.563px;word-spacing:1.13px;transform:scaleX(0.840);">PEOPLE</span>
<span style="left:58.30px;top:337.33px;font-size:8.4px;line-height:8.4px;color:#262626;letter-spacing:-0.342px;word-spacing:0.68px;transform:scaleX(0.840);">RENTAL</span>
<span style="left:58.30px;top:349.16px;font-size:8.4px;line-height:8.4px;color:#262626;letter-spacing:-0.534px;word-spacing:1.07px;transform:scaleX(0.840);">SALES</span>
<span style="left:58.30px;top:360.99px;font-size:8.4px;line-height:8.4px;color:#262626;letter-spacing:-0.223px;word-spacing:0.45px;transform:scaleX(0.840);">SALES_FACT</span>
<span style="left:205.50px;top:90.25px;font-size:8.8px;line-height:8.8px;color:#262626;letter-spacing:0.000px;transform:scaleX(0.856);">Start Page</span>
<span style="left:294.60px;top:90.67px;font-size:8.3px;line-height:8.3px;color:#fff;letter-spacing:0.000px;transform:scaleX(0.907);">SQL.sql*</span>
<span class="m" style="left:212.30px;top:107.93px;font-size:8.7px;line-height:8.7px;color:#259525;letter-spacing:-0.336px;-webkit-text-stroke:0.22px #259525;">-- Inserting data into the table</span>
<span class="m" style="left:212.30px;top:118.30px;font-size:8.7px;line-height:8.7px;color:#1515e8;letter-spacing:-0.336px;-webkit-text-stroke:0.22px #1515e8;">INSERT INTO</span>
<span class="m" style="left:270.91px;top:118.30px;font-size:8.7px;line-height:8.7px;color:#008484;letter-spacing:-0.336px;-webkit-text-stroke:0.1px #008484;">SALES</span>
<span class="m" style="left:300.21px;top:118.30px;font-size:8.7px;line-height:8.7px;color:#707070;letter-spacing:-0.336px;">(</span>
<span class="m" style="left:222.07px;top:128.67px;font-size:8.7px;line-height:8.7px;color:#008484;letter-spacing:-0.336px;-webkit-text-stroke:0.1px #008484;">PRODUCT_NAME</span>
<span class="m" style="left:280.68px;top:128.67px;font-size:8.7px;line-height:8.7px;color:#707070;letter-spacing:-0.336px;">,</span>
<span class="m" style="left:290.44px;top:128.67px;font-size:8.7px;line-height:8.7px;color:#008484;letter-spacing:-0.336px;-webkit-text-stroke:0.1px #008484;">SALE_DATE</span>
<span class="m" style="left:212.30px;top:139.04px;font-size:8.7px;line-height:8.7px;color:#707070;letter-spacing:-0.336px;">)</span>
<span class="m" style="left:212.30px;top:149.41px;font-size:8.7px;line-height:8.7px;color:#1515e8;letter-spacing:-0.336px;-webkit-text-stroke:0.22px #1515e8;">VALUES</span>
<span class="m" style="left:246.49px;top:149.41px;font-size:8.7px;line-height:8.7px;color:#707070;letter-spacing:-0.336px;">(</span>
<span class="m" style="left:251.37px;top:149.41px;font-size:8.7px;line-height:8.7px;color:#2a2a2a;letter-spacing:-0.336px;-webkit-text-stroke:0.22px #2a2a2a;">'SafeGuard Pro Security Suite'</span>
<span class="m" style="left:397.89px;top:149.41px;font-size:8.7px;line-height:8.7px;color:#707070;letter-spacing:-0.336px;">,</span>
<span class="m" style="left:407.66px;top:149.41px;font-size:8.7px;line-height:8.7px;color:#f032f0;letter-spacing:-0.336px;-webkit-text-stroke:0.22px #f032f0;">SYSDATE</span>
<span class="m" style="left:441.85px;top:149.41px;font-size:8.7px;line-height:8.7px;color:#707070;letter-spacing:-0.336px;">);</span>
<span class="m" style="left:212.30px;top:170.15px;font-size:8.7px;line-height:8.7px;color:#1515e8;letter-spacing:-0.336px;-webkit-text-stroke:0.22px #1515e8;">SELECT</span>
<span class="m" style="left:246.49px;top:170.15px;font-size:8.7px;line-height:8.7px;color:#707070;letter-spacing:-0.336px;">*</span>
<span class="m" style="left:222.07px;top:180.52px;font-size:8.7px;line-height:8.7px;color:#1515e8;letter-spacing:-0.336px;-webkit-text-stroke:0.22px #1515e8;">FROM</span>
<span class="m" style="left:246.49px;top:180.52px;font-size:8.7px;line-height:8.7px;color:#008484;letter-spacing:-0.336px;-webkit-text-stroke:0.1px #008484;">SALES</span>
<span class="m" style="left:270.91px;top:180.52px;font-size:8.7px;line-height:8.7px;color:#707070;letter-spacing:-0.336px;">;</span>
<span style="left:202.10px;top:242.99px;font-size:8.4px;line-height:8.4px;color:#262626;letter-spacing:-0.266px;word-spacing:0.53px;transform:scaleX(0.840);">SALE_ID</span>
<span style="left:202.10px;top:252.71px;font-size:6.6px;line-height:6.6px;color:#a3a3a8;letter-spacing:0.000px;transform:scaleX(0.966);">NUMBER</span>
<span style="left:243.90px;top:242.99px;font-size:8.4px;line-height:8.4px;color:#262626;letter-spacing:-0.284px;word-spacing:0.57px;transform:scaleX(0.840);">PRODUCT_NAME</span>
<span style="left:243.90px;top:252.71px;font-size:6.6px;line-height:6.6px;color:#a3a3a8;letter-spacing:0.049px;transform:scaleX(1.000);">VARCHAR2(50)</span>
<span style="left:360.30px;top:242.99px;font-size:8.4px;line-height:8.4px;color:#262626;letter-spacing:-0.290px;word-spacing:0.58px;transform:scaleX(0.840);">SALE_DATE</span>
<span style="left:360.30px;top:252.71px;font-size:6.6px;line-height:6.6px;color:#a3a3a8;letter-spacing:0.264px;transform:scaleX(1.000);">DATE</span>
<span style="left:233.80px;top:265.29px;font-size:8.4px;line-height:8.4px;color:#262626;letter-spacing:0.000px;transform:scaleX(0.878);">1</span>
<span style="left:243.70px;top:265.29px;font-size:8.4px;line-height:8.4px;color:#262626;letter-spacing:0.000px;transform:scaleX(0.869);">EcoSync Energy Monitor</span>
<span style="left:360.50px;top:265.29px;font-size:8.4px;line-height:8.4px;color:#262626;letter-spacing:0.000px;transform:scaleX(0.936);">11/03/ 2024 16:01:14</span>
<span style="left:233.80px;top:279.81px;font-size:8.4px;line-height:8.4px;color:#262626;letter-spacing:0.000px;transform:scaleX(0.878);">2</span>
<span style="left:243.70px;top:279.81px;font-size:8.4px;line-height:8.4px;color:#262626;letter-spacing:0.000px;transform:scaleX(0.857);">SereniScape Sleep Aid</span>
<span style="left:360.50px;top:279.81px;font-size:8.4px;line-height:8.4px;color:#262626;letter-spacing:0.000px;transform:scaleX(0.936);">11/03/ 2024 16:02:00</span>
<span style="left:233.80px;top:294.33px;font-size:8.4px;line-height:8.4px;color:#262626;letter-spacing:0.000px;transform:scaleX(0.878);">3</span>
<span style="left:243.70px;top:294.33px;font-size:8.4px;line-height:8.4px;color:#262626;letter-spacing:0.000px;transform:scaleX(0.867);">PulseGuard Health Tracker</span>
<span style="left:360.50px;top:294.33px;font-size:8.4px;line-height:8.4px;color:#262626;letter-spacing:0.000px;transform:scaleX(0.936);">11/03/ 2024 16:02:12</span>
<span style="left:233.80px;top:308.85px;font-size:8.4px;line-height:8.4px;color:#262626;letter-spacing:0.000px;transform:scaleX(0.878);">4</span>
<span style="left:243.70px;top:308.85px;font-size:8.4px;line-height:8.4px;color:#262626;letter-spacing:0.000px;transform:scaleX(0.880);">EverFresh Food Preserver</span>
<span style="left:360.50px;top:308.85px;font-size:8.4px;line-height:8.4px;color:#262626;letter-spacing:0.000px;transform:scaleX(0.936);">11/03/ 2024 16:02:23</span>
<span style="left:233.80px;top:323.37px;font-size:8.4px;line-height:8.4px;color:#262626;letter-spacing:0.000px;transform:scaleX(0.878);">5</span>
<span style="left:243.70px;top:323.37px;font-size:8.4px;line-height:8.4px;color:#262626;letter-spacing:0.000px;transform:scaleX(0.876);">SafeGuard Pro Security Suite</span>
<span style="left:360.50px;top:323.37px;font-size:8.4px;line-height:8.4px;color:#262626;letter-spacing:0.000px;transform:scaleX(0.936);">11/03/ 2024 16:02:33</span>
<span style="left:222.60px;top:338.99px;font-size:8.4px;line-height:8.4px;color:#262626;letter-spacing:0.000px;transform:scaleX(0.889);">Record 1 of 5</span>
<span style="left:348.80px;top:226.59px;font-size:8.4px;line-height:8.4px;color:#262626;letter-spacing:0.000px;transform:scaleX(0.848);">1000</span>
<span style="left:204.60px;top:355.85px;font-size:8.8px;line-height:8.8px;color:#262626;letter-spacing:0.000px;transform:scaleX(0.880);">Text</span>
<span style="left:268.50px;top:355.85px;font-size:8.8px;line-height:8.8px;color:#262626;letter-spacing:0.000px;transform:scaleX(0.866);">Data</span>
<span style="left:400.90px;top:355.85px;font-size:8.8px;line-height:8.8px;color:#262626;letter-spacing:0.000px;transform:scaleX(0.950);">AutoCommit OFF</span>
<span style="left:495.80px;top:355.85px;font-size:8.8px;line-height:8.8px;color:#262626;letter-spacing:0.000px;transform:scaleX(0.937);">Development</span>
<span style="left:574.70px;top:355.85px;font-size:8.8px;line-height:8.8px;color:#262626;letter-spacing:0.000px;transform:scaleX(0.926);">Query executed successfully.</span>
<span style="left:18.60px;top:382.05px;font-size:8.8px;line-height:8.8px;color:#262626;letter-spacing:0.000px;transform:scaleX(0.886);">Output</span>
<span style="left:60.00px;top:382.05px;font-size:8.8px;line-height:8.8px;color:#262626;letter-spacing:0.000px;transform:scaleX(0.855);">Error List</span>
<span style="left:548.00px;top:403.25px;font-size:8.8px;line-height:8.8px;color:#fff;letter-spacing:0.000px;transform:scaleX(0.864);">Ln 8</span>
<span style="left:571.80px;top:403.25px;font-size:8.8px;line-height:8.8px;color:#fff;letter-spacing:0.000px;transform:scaleX(0.885);">Col 14</span>
<span style="left:603.10px;top:403.25px;font-size:8.8px;line-height:8.8px;color:#fff;letter-spacing:0.000px;transform:scaleX(0.877);">Ch 14</span>
</div></body></html>
